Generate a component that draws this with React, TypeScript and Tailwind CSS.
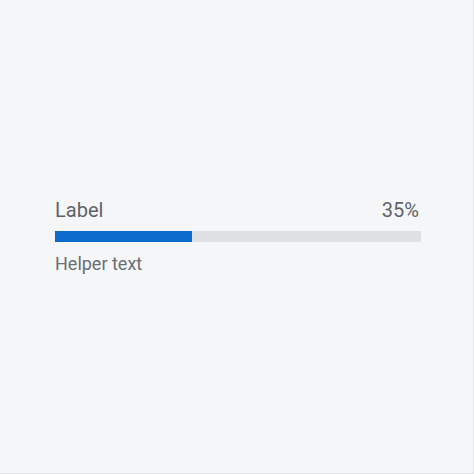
export default function App() {
  const value = 37.4;

  return (
    <div
      className="h-[474px] w-[474px] bg-[#f5f6f8] border-r border-b border-[#e3e5e8] px-[55px] pt-[196px]"
      style={{ fontFamily: "Roboto, 'Liberation Sans', sans-serif" }}
    >
      <div className="w-[366px]">
        <div className="flex items-center justify-between text-[20px] leading-[28px] text-[#5f6368]">
          <span>Label</span>
          <span className="pr-[2px]">35%</span>
        </div>
        <div className="mt-[7px] h-[11px] w-full bg-[#e0e1e3]">
          <div className="h-full bg-[#0b6bcb]" style={{ width: `${value}%` }} />
        </div>
        <p className="mt-[10px] text-[18px] leading-[24px] text-[#6b6e73]">Helper text</p>
      </div>
    </div>
  );
}
